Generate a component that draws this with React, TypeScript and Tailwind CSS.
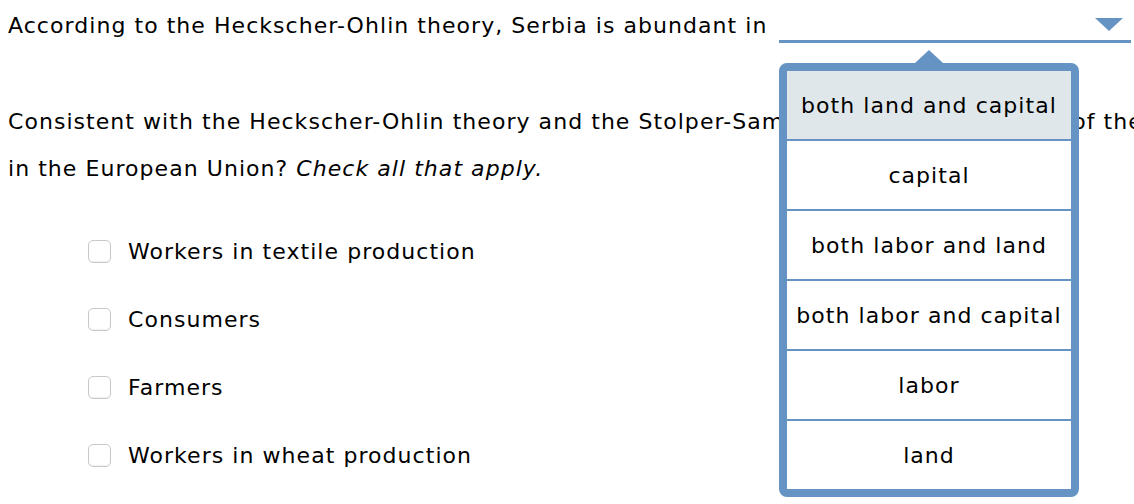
import React from 'react';

const options = [
  'both land and capital',
  'capital',
  'both labor and land',
  'both labor and capital',
  'labor',
  'land',
];

const groups = [
  'Workers in textile production',
  'Consumers',
  'Farmers',
  'Workers in wheat production',
];

function Checkbox() {
  return (
    <span className="inline-block w-[23px] h-[23px] rounded-[5px] border border-[#c8c8c8] bg-white shadow-[inset_0_-1px_1px_rgba(0,0,0,0.06)]" />
  );
}

function Dropdown() {
  return (
    <div className="absolute left-[779px] top-[50px] w-[300px] flex flex-col items-start">
      {/* pointer */}
      <div className="ml-[136px] w-0 h-0 border-l-[14px] border-r-[14px] border-b-[13px] border-l-transparent border-r-transparent border-b-[#6594c4]" />
      <div className="w-[300px] rounded-[8px] border-[8px] border-[#6594c4] bg-white flex flex-col overflow-hidden">
        {options.map((o, i) => (
          <div
            key={o}
            className={
              'flex items-center justify-center ' +
              (i === 0 ? 'bg-[#e0e7ea] ' : 'bg-white ') +
              (i < options.length - 1 ? 'h-[70px] border-b-2 border-[#6594c4]' : 'h-[68px]')
            }
          >
            <span className="pt-[1px]">{o}</span>
          </div>
        ))}
      </div>
    </div>
  );
}

export default function App() {
  return (
    <div
      className="relative w-[1134px] h-[504px] overflow-hidden bg-white text-black text-[22px] tracking-[1.05px]"
      style={{ fontFamily: '"DejaVu Sans", Verdana, sans-serif' }}
    >
      <div className="pl-[8px] pt-[9px] flex items-start whitespace-nowrap">
        <span className="leading-[34px]">According to the Heckscher-Ohlin theory, Serbia is abundant in</span>
        <div className="relative ml-[12px] -mt-[1px] w-[352px] h-[35px] border-b-[3px] border-[#6594c4]">
          <span className="absolute right-[8px] top-[10px] w-0 h-0 border-l-[14px] border-r-[14px] border-t-[13px] border-l-transparent border-r-transparent border-t-[#6594c4]" />
        </div>
      </div>

      <div className="pl-[8px] mt-[55px] leading-[47px] whitespace-nowrap">
        <div>
          Consistent with the Heckscher-Ohlin theory and the Stolper-Samuelson theorem,{' '}
          <span className="tracking-[2.5px]">which</span> of the following groups will gain from Serbia joining
        </div>
        <div>
          in the European Union? <i>Check all that apply.</i>
        </div>
      </div>

      <div className="mt-[25px] pl-[88px] flex flex-col">
        {groups.map((g) => (
          <label key={g} className="h-[68px] flex items-center gap-[17px]">
            <Checkbox />
            <span>{g}</span>
          </label>
        ))}
      </div>

      <Dropdown />
    </div>
  );
}
